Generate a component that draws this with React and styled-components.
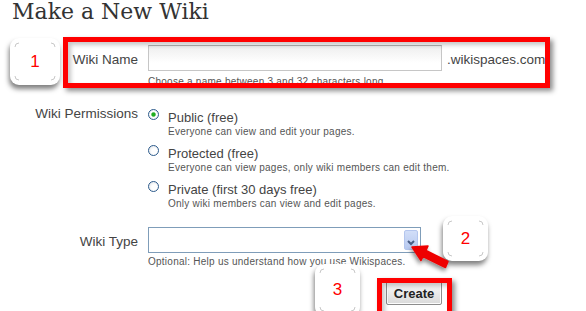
import styled, { createGlobalStyle } from "styled-components";

const GlobalStyle = createGlobalStyle`
  html, body {
    margin: 0;
    padding: 0;
    background: #fff;
  }
  body {
    font-family: "Liberation Sans", Arial, sans-serif;
  }
`;

const Page = styled.div`
  position: relative;
  width: 586px;
  height: 311px;
  overflow: hidden;
  background: #fff;
`;

const Title = styled.h1`
  margin: 0 0 0 12px;
  padding-top: 1px;
  font-family: "DejaVu Serif", serif;
  font-weight: normal;
  font-size: 22px;
  line-height: 22px;
  color: #333;
`;

const Form = styled.div`
  display: flex;
  flex-direction: column;
`;

const Row = styled.div`
  display: grid;
  grid-template-columns: 138px 1fr;
  column-gap: 10px;
  margin-top: ${(p) => p.$top}px;
`;

const Label = styled.label`
  text-align: right;
  font-size: 13.5px;
  line-height: ${(p) => p.$lh}px;
  margin-top: ${(p) => p.$shift || 0}px;
  color: #444;
`;

const Field = styled.div`
  display: flex;
  flex-direction: column;
`;

const InputLine = styled.div`
  display: flex;
  align-items: flex-start;
`;

const TextInput = styled.input`
  box-sizing: border-box;
  width: 294px;
  height: 26px;
  margin: 0;
  padding: 0 4px;
  border: 1px solid #c6c6c6;
  border-top-color: #b0b0b0;
  background: linear-gradient(#eeeeee, #ffffff 70%);
  font: inherit;
`;

const Suffix = styled.span`
  margin-left: 5px;
  font-size: 13.5px;
  line-height: 29px;
  color: #444;
`;

const Help = styled.div`
  margin-top: ${(p) => p.$top || 0}px;
  font-size: 10px;
  line-height: 12px;
  letter-spacing: 0.25px;
  color: #555;
`;

const Options = styled.div`
  display: flex;
  flex-direction: column;
  gap: 8px;
`;

const Option = styled.div`
  display: grid;
  grid-template-columns: 11px 1fr;
  column-gap: 9px;
`;

const Radio = styled.span`
  box-sizing: border-box;
  width: 11px;
  height: 11px;
  margin-top: -1px;
  border-radius: 50%;
  border: 1px solid #2d5b8c;
  background: ${(p) =>
    p.$checked
      ? "radial-gradient(circle, #1fae1f 0 1.6px, #8fd48f 2.2px, #ffffff 2.8px, #e3e6ea 100%)"
      : "radial-gradient(circle at 60% 60%, #ffffff 35%, #d9dde3 100%)"};
`;

const OptionTitle = styled.div`
  font-size: 13px;
  line-height: 16px;
  color: #444;
`;

const OptionDesc = styled(Help)`
  grid-column: 2;
`;

const Select = styled.div`
  box-sizing: border-box;
  width: 273px;
  height: 26px;
  padding: 2px;
  border: 1px solid #7f9db9;
  background: #fff;
  display: flex;
  justify-content: flex-end;
`;

const DropButton = styled.div`
  box-sizing: border-box;
  width: 14px;
  height: 100%;
  border: 1px solid #b4c6ee;
  border-radius: 2px;
  background: linear-gradient(#d2def8, #b7c9f0);
  display: flex;
  align-items: center;
  justify-content: center;
  padding-top: 6px;
`;

const ButtonBar = styled.div`
  width: 294px;
  display: flex;
  justify-content: flex-end;
`;

const Button = styled.button`
  box-sizing: border-box;
  width: 56px;
  height: 24px;
  margin: 0;
  padding: 0;
  border: 1px solid #8d8d8d;
  border-radius: 2px;
  box-shadow: inset 0 0 0 1px #fdfdfd;
  background: linear-gradient(#fbfbfb, #dadada);
  font-family: "Liberation Sans", Arial, sans-serif;
  font-weight: bold;
  font-size: 13px;
  color: #222;
`;

const Highlight = styled.div`
  position: absolute;
  left: ${(p) => p.$x}px;
  top: ${(p) => p.$y}px;
  width: ${(p) => p.$w}px;
  height: ${(p) => p.$h}px;
  box-sizing: border-box;
  border: 5px solid #ff0000;
  box-shadow: 3px 3px 5px rgba(0, 0, 0, 0.45),
    inset 3px 3px 4px rgba(0, 0, 0, 0.22);
`;

const Badge = styled.div`
  position: absolute;
  left: ${(p) => p.$x}px;
  top: ${(p) => p.$y}px;
  width: ${(p) => p.$w}px;
  height: ${(p) => p.$h}px;
  border-radius: 9px;
  background: #fff;
  box-shadow: -1px 4px 5px rgba(0, 0, 0, 0.5);
  display: flex;
  align-items: center;
  justify-content: center;
  font-family: "Liberation Sans", Arial, sans-serif;
  font-size: 17px;
  color: #ff0000;
  svg {
    position: absolute;
    inset: 0;
  }
`;

const Overlay = styled.svg`
  position: absolute;
  left: 0;
  top: 0;
  pointer-events: none;
`;

function Corners({ w, h }) {
  const s = "#c8c8c8";
  return (
    <svg width={w} height={h}>
      <path d={`M5 9 Q5 5 9 5`} stroke={s} fill="none" />
      <path d={`M${w - 9} 5 Q${w - 5} 5 ${w - 5} 9`} stroke={s} fill="none" />
      <path d={`M5 ${h - 9} Q5 ${h - 5} 9 ${h - 5}`} stroke={s} fill="none" />
      <path
        d={`M${w - 9} ${h - 5} Q${w - 5} ${h - 5} ${w - 5} ${h - 9}`}
        stroke={s}
        fill="none"
      />
    </svg>
  );
}

function Step({ n, x, y, w, h }) {
  return (
    <Badge $x={x} $y={y} $w={w} $h={h}>
      <Corners w={w} h={h} />
      <span>{n}</span>
    </Badge>
  );
}

const options = [
  {
    title: "Public (free)",
    desc: "Everyone can view and edit your pages.",
    checked: true,
  },
  {
    title: "Protected (free)",
    desc: "Everyone can view pages, only wiki members can edit them.",
  },
  {
    title: "Private (first 30 days free)",
    desc: "Only wiki members can view and edit pages.",
  },
];

export default function App() {
  return (
    <Page>
      <GlobalStyle />
      <Title>Make a New Wiki</Title>

      <Form>
        <Row $top={22}>
          <Label $lh={29}>Wiki Name</Label>
          <Field>
            <InputLine>
              <TextInput type="text" />
              <Suffix>.wikispaces.com</Suffix>
            </InputLine>
            <Help $top={2}>Choose a name between 3 and 32 characters long.</Help>
          </Field>
        </Row>

        <Row $top={22}>
          <Label $lh={16} $shift={-4}>
            Wiki Permissions
          </Label>
          <Options>
            {options.map((o) => (
              <Option key={o.title}>
                <Radio $checked={o.checked} />
                <OptionTitle>{o.title}</OptionTitle>
                <OptionDesc>{o.desc}</OptionDesc>
              </Option>
            ))}
          </Options>
        </Row>

        <Row $top={17}>
          <Label $lh={30}>Wiki Type</Label>
          <Field>
            <Select>
              <DropButton>
                <svg width="8" height="6" viewBox="0 0 8 6">
                  <path
                    d="M1 1 L4 4 L7 1"
                    stroke="#4a5e86"
                    strokeWidth="2"
                    fill="none"
                  />
                </svg>
              </DropButton>
            </Select>
            <Help $top={3}>
              Optional: Help us understand how you use Wikispaces.
            </Help>
          </Field>
        </Row>

        <Row $top={13}>
          <span />
          <ButtonBar>
            <Button type="button">Create</Button>
          </ButtonBar>
        </Row>
      </Form>

      <Highlight $x={63} $y={37} $w={487} $h={51} />
      <Highlight $x={377} $y={278} $w={75} $h={40} />

      <Step n="1" x={10} y={38} w={50} h={47} />
      <Step n="2" x={443} y={216} w={45} h={45} />
      <Step n="3" x={315} y={264} w={45} h={52} />

      <Overlay width="586" height="311">
        <defs>
          <filter id="arrowShadow" x="-20%" y="-20%" width="160%" height="160%">
            <feDropShadow dx="-1" dy="3" stdDeviation="2" floodColor="#000" floodOpacity="0.45" />
          </filter>
        </defs>
        <polygon
          points="412,247 428,246 426,250.5 448,261.5 445.5,267.5 423,256.5 421,260.5"
          fill="#ee0000"
          stroke="#ee0000"
          strokeWidth="1.5"
          strokeLinejoin="round"
          filter="url(#arrowShadow)"
        />
      </Overlay>
    </Page>
  );
}
